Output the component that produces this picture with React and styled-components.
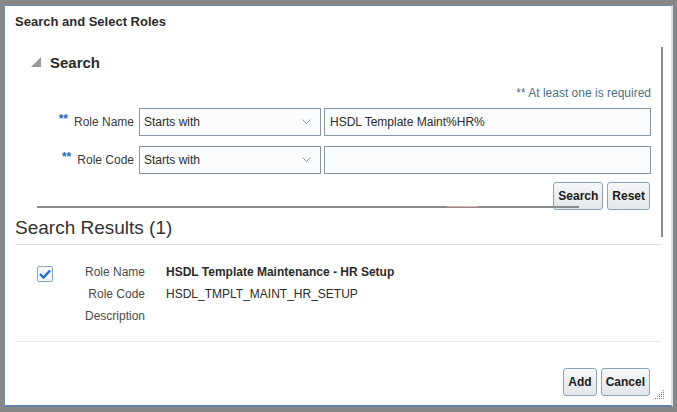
import React from 'react';
import styled, { createGlobalStyle } from 'styled-components';

const GlobalStyle = createGlobalStyle`
  html, body {
    margin: 0;
    padding: 0;
    background: #878787;
  }
  body {
    font-family: "Liberation Sans", Arial, sans-serif;
    color: #333;
  }
`;

const Backdrop = styled.div`
  width: 677px;
  height: 412px;
  box-sizing: border-box;
  padding: 5px 4px 5px 4px;
  background: #878787;
`;

const Dialog = styled.div`
  width: 669px;
  height: 402px;
  box-sizing: border-box;
  background: #fff;
  border: 1px solid #6f8fae;
  border-right: 2px solid #d5dde6;
  border-bottom: 2px solid #5f84a8;
  display: flex;
  flex-direction: column;
  position: relative;
`;

const Title = styled.div`
  height: 35px;
  flex-shrink: 0;
  box-sizing: border-box;
  padding: 8px 0 0 10px;
  line-height: 16px;
  font-size: 13px;
  font-weight: bold;
  color: #2b2b2b;
`;

const Body = styled.div`
  position: relative;
  margin: 0 10px;
`;

const SearchPanel = styled.div`
  padding: 11px 10px 0 16px;
  height: 171px;
  box-sizing: border-box;
`;

const PanelHeader = styled.div`
  display: flex;
  align-items: center;
  gap: 9px;
  height: 20px;
  font-size: 15px;
  font-weight: bold;
  color: #2b2b2b;
`;

const Triangle = styled.span`
  width: 0;
  height: 0;
  border-left: 10px solid transparent;
  border-bottom: 10px solid #9a9a9a;
`;

const Required = styled.div`
  margin-top: 14px;
  text-align: right;
  line-height: 14px;
  font-size: 12px;
  color: #4d6f88;
`;

const FormRow = styled.div`
  display: flex;
  align-items: center;
  height: 28px;
  margin-top: ${props => props.$first ? '8px' : '10px'};
`;

const Label = styled.div`
  width: 103px;
  padding-right: 5px;
  box-sizing: content-box;
  text-align: right;
  font-size: 12px;
  color: #3a3a3a;
  white-space: nowrap;
`;

const Stars = styled.span`
  color: #1f6fb4;
  font-weight: bold;
  margin-right: 6px;
  position: relative;
  top: -3px;
`;

const Select = styled.div`
  width: 182px;
  height: 28px;
  box-sizing: border-box;
  border: 1px solid #8797a8;
  background: #fafcfe;
  display: flex;
  align-items: center;
  justify-content: space-between;
  padding: 0 9px 0 4px;
  font-size: 12px;
  color: #2b2b2b;
`;

const Input = styled.div`
  width: 327px;
  height: 28px;
  margin-left: 3px;
  box-sizing: border-box;
  border: 1px solid #8797a8;
  background: #fafcfe;
  display: flex;
  align-items: center;
  padding: 0 5px;
  font-size: 12px;
  color: #2b2b2b;
`;

const ButtonBar = styled.div`
  display: flex;
  justify-content: flex-end;
  gap: 4px;
  margin-top: 8px;
  padding-right: 1px;
`;

const Button = styled.button`
  height: 28px;
  padding: 0 4px;
  font-family: "Liberation Sans", Arial, sans-serif;
  font-size: 12px;
  font-weight: bold;
  color: #1a1a1a;
  background: linear-gradient(#f5f7f9, #e3e7eb);
  border: 1px solid #8ea2b5;
  border-radius: 3px;
`;

/* leftover scrollbar strokes that lie over the panel */
const HScroll = styled.div`
  position: absolute;
  left: 22px;
  top: 165px;
  width: 542px;
  height: 2px;
  background: #8c8c8c;
`;

const HScrollMark = styled.div`
  position: absolute;
  left: 432px;
  top: 165px;
  width: 31px;
  height: 1px;
  background: #e0a8a8;
`;

const VScroll = styled.div`
  position: absolute;
  right: -2px;
  top: 6px;
  width: 2px;
  height: 190px;
  background: #8c8c8c;
`;

const ResultsHeading = styled.div`
  height: 33px;
  box-sizing: border-box;
  padding-top: 4px;
  line-height: 24px;
  font-size: 19px;
  color: #333;
  border-bottom: 1px solid #dbe2e8;
`;

const Result = styled.div`
  display: grid;
  grid-template-columns: 16px 92px 1fr;
  grid-auto-rows: 22px;
  padding: 16px 0 14px 22px;
  border-bottom: 1px solid #e6e9ec;
`;

const Check = styled.div`
  grid-row: 1;
  grid-column: 1;
  width: 16px;
  height: 16px;
  margin-top: 5px;
  box-sizing: border-box;
  border: 1px solid #8ea2b5;
  border-radius: 2px;
  background: #f3f7fb;
  display: flex;
  align-items: center;
  justify-content: center;
`;

const ResultLabel = styled.div`
  grid-row: ${props => props.$row};
  grid-column: 2;
  text-align: right;
  line-height: 22px;
  font-size: 12px;
  color: #4a4a4a;
`;

const ResultValue = styled.div`
  grid-row: ${props => props.$row};
  grid-column: 3;
  padding-left: 21px;
  line-height: 22px;
  font-size: 12px;
  color: #2b2b2b;
  font-weight: ${props => props.$bold ? 'bold' : 'normal'};
`;

const Footer = styled.div`
  display: flex;
  justify-content: flex-end;
  gap: 4px;
  padding: 26px 21px 0 0;
`;

const Grip = styled.svg`
  position: absolute;
  right: 6px;
  bottom: 5px;
`;

const Chevron = () => (
  <svg width="9" height="6" viewBox="0 0 9 6">
    <path d="M0.5 0.5 L4.5 4.5 L8.5 0.5" fill="none" stroke="#8c98a4" strokeWidth="1" />
  </svg>
);

const grip = [[8, 0], [6, 2], [8, 2], [4, 4], [6, 4], [8, 4], [2, 6], [4, 6], [6, 6], [8, 6], [0, 8], [2, 8], [4, 8], [6, 8], [8, 8]];

const fields = [
  { label: 'Role Name', value: 'HSDL Template Maintenance - HR Setup', bold: true },
  { label: 'Role Code', value: 'HSDL_TMPLT_MAINT_HR_SETUP' },
  { label: 'Description', value: '' },
];

export default function App() {
  return (
    <>
      <GlobalStyle />
      <Backdrop>
        <Dialog>
          <Title>Search and Select Roles</Title>
          <Body>
            <SearchPanel>
              <PanelHeader>
                <Triangle />
                Search
              </PanelHeader>
              <Required>** At least one is required</Required>
              <FormRow $first>
                <Label><Stars>**</Stars>Role Name</Label>
                <Select>Starts with<Chevron /></Select>
                <Input>HSDL Template Maint%HR%</Input>
              </FormRow>
              <FormRow>
                <Label><Stars>**</Stars>Role Code</Label>
                <Select>Starts with<Chevron /></Select>
                <Input />
              </FormRow>
              <ButtonBar>
                <Button>Search</Button>
                <Button>Reset</Button>
              </ButtonBar>
            </SearchPanel>
            <HScroll />
            <HScrollMark />
            <VScroll />
            <ResultsHeading>Search Results (1)</ResultsHeading>
            <Result>
              <Check>
                <svg width="12" height="10" viewBox="0 0 12 10">
                  <path d="M1 5 L4.5 8.5 L11 1.5" fill="none" stroke="#1b6fc8" strokeWidth="2.4" />
                </svg>
              </Check>
              {fields.map((f, i) => (
                <React.Fragment key={f.label}>
                  <ResultLabel $row={i + 1}>{f.label}</ResultLabel>
                  <ResultValue $row={i + 1} $bold={f.bold}>{f.value}</ResultValue>
                </React.Fragment>
              ))}
            </Result>
          </Body>
          <Footer>
            <Button>Add</Button>
            <Button>Cancel</Button>
          </Footer>
          <Grip width="10" height="10" viewBox="0 0 10 10">
            {grip.map(([x, y]) => (
              <rect key={`${x}-${y}`} x={x} y={y} width="1" height="1" fill="#8a8a8a" />
            ))}
          </Grip>
        </Dialog>
      </Backdrop>
    </>
  );
}
